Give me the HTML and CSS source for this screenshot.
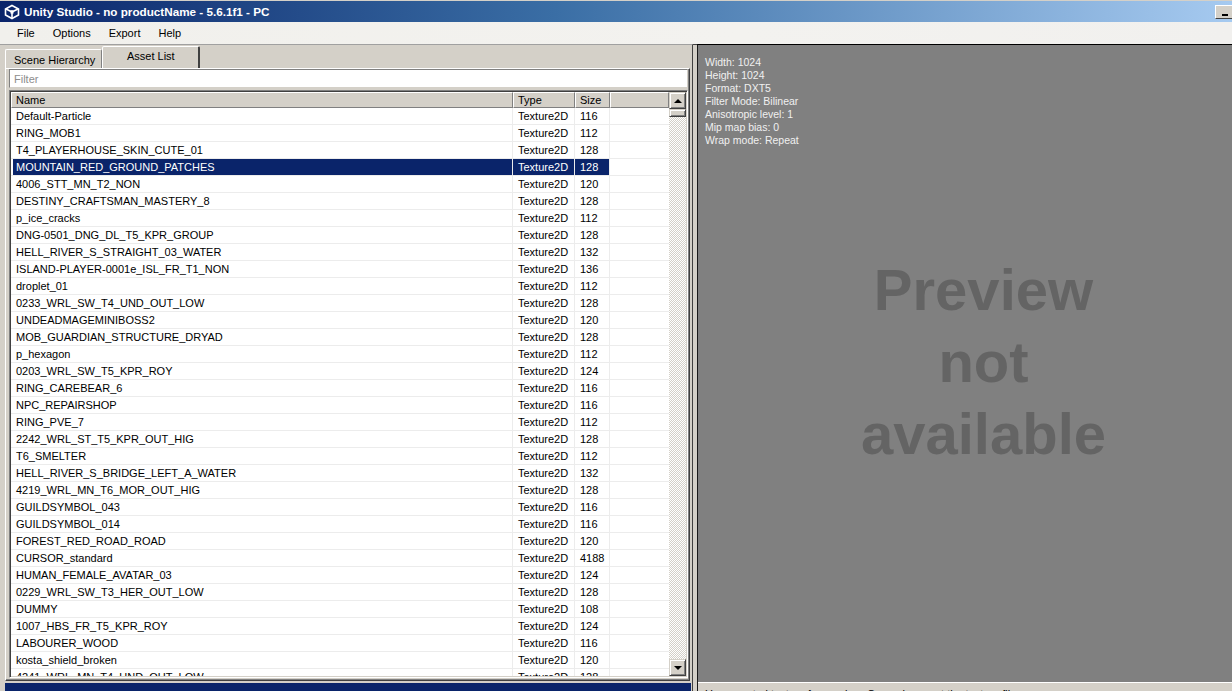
FILE: index.html
```html
<!DOCTYPE html>
<html lang="en">
<head>
    <meta charset="UTF-8">
    <title>Unity Studio - no productName - 5.6.1f1 - PC</title>
    <link rel="stylesheet" href="styles.css">
</head>
<body>

<div class="window">
    <div class="titlebar">
        <svg class="app-icon" width="16" height="16" viewBox="0 0 16 16">
            <path d="M8 1.5 L14.5 5 L14.5 11 L8 14.5 L1.5 11 L1.5 5 Z" fill="none" stroke="#fff" stroke-width="1.6"/>
            <path d="M8 8 L8 14 M8 8 L2 5 M8 8 L14 5" stroke="#fff" stroke-width="1.6" fill="none"/>
            <path d="M6.5 6.2 L9.5 6.2 L9.5 9.6 L6.5 9.6 Z" fill="#fff"/>
        </svg>
        <span class="title">Unity Studio - no productName - 5.6.1f1 - PC</span>
        <span class="min-btn"><span class="min-glyph"></span></span>
    </div>

    <div class="menubar">
        <span class="menu-item">File</span>
        <span class="menu-item">Options</span>
        <span class="menu-item">Export</span>
        <span class="menu-item">Help</span>
    </div>

    <div class="main">
        <div class="left">
            <div class="tabs">
                <div class="tab">Scene Hierarchy</div>
                <div class="tab active">Asset List</div>
            </div>
            <div class="tabpage">
                <input class="filter" type="text" placeholder="Filter">
                <div class="listview">
                    <div class="list-content">
                        <div class="header">
                            <div class="hcell">Name</div>
                            <div class="hcell">Type</div>
                            <div class="hcell">Size</div>
                            <div class="hcell"></div>
                        </div>
                        <div class="rows">
                            <div class="row"><div class="cell">Default-Particle</div><div class="cell">Texture2D</div><div class="cell">116</div><div class="fill"></div></div>
                            <div class="row"><div class="cell">RING_MOB1</div><div class="cell">Texture2D</div><div class="cell">112</div><div class="fill"></div></div>
                            <div class="row"><div class="cell">T4_PLAYERHOUSE_SKIN_CUTE_01</div><div class="cell">Texture2D</div><div class="cell">128</div><div class="fill"></div></div>
                            <div class="row sel"><div class="cell">MOUNTAIN_RED_GROUND_PATCHES</div><div class="cell">Texture2D</div><div class="cell">128</div><div class="fill"></div></div>
                            <div class="row"><div class="cell">4006_STT_MN_T2_NON</div><div class="cell">Texture2D</div><div class="cell">120</div><div class="fill"></div></div>
                            <div class="row"><div class="cell">DESTINY_CRAFTSMAN_MASTERY_8</div><div class="cell">Texture2D</div><div class="cell">128</div><div class="fill"></div></div>
                            <div class="row"><div class="cell">p_ice_cracks</div><div class="cell">Texture2D</div><div class="cell">112</div><div class="fill"></div></div>
                            <div class="row"><div class="cell">DNG-0501_DNG_DL_T5_KPR_GROUP</div><div class="cell">Texture2D</div><div class="cell">128</div><div class="fill"></div></div>
                            <div class="row"><div class="cell">HELL_RIVER_S_STRAIGHT_03_WATER</div><div class="cell">Texture2D</div><div class="cell">132</div><div class="fill"></div></div>
                            <div class="row"><div class="cell">ISLAND-PLAYER-0001e_ISL_FR_T1_NON</div><div class="cell">Texture2D</div><div class="cell">136</div><div class="fill"></div></div>
                            <div class="row"><div class="cell">droplet_01</div><div class="cell">Texture2D</div><div class="cell">112</div><div class="fill"></div></div>
                            <div class="row"><div class="cell">0233_WRL_SW_T4_UND_OUT_LOW</div><div class="cell">Texture2D</div><div class="cell">128</div><div class="fill"></div></div>
                            <div class="row"><div class="cell">UNDEADMAGEMINIBOSS2</div><div class="cell">Texture2D</div><div class="cell">120</div><div class="fill"></div></div>
                            <div class="row"><div class="cell">MOB_GUARDIAN_STRUCTURE_DRYAD</div><div class="cell">Texture2D</div><div class="cell">128</div><div class="fill"></div></div>
                            <div class="row"><div class="cell">p_hexagon</div><div class="cell">Texture2D</div><div class="cell">112</div><div class="fill"></div></div>
                            <div class="row"><div class="cell">0203_WRL_SW_T5_KPR_ROY</div><div class="cell">Texture2D</div><div class="cell">124</div><div class="fill"></div></div>
                            <div class="row"><div class="cell">RING_CAREBEAR_6</div><div class="cell">Texture2D</div><div class="cell">116</div><div class="fill"></div></div>
                            <div class="row"><div class="cell">NPC_REPAIRSHOP</div><div class="cell">Texture2D</div><div class="cell">116</div><div class="fill"></div></div>
                            <div class="row"><div class="cell">RING_PVE_7</div><div class="cell">Texture2D</div><div class="cell">112</div><div class="fill"></div></div>
                            <div class="row"><div class="cell">2242_WRL_ST_T5_KPR_OUT_HIG</div><div class="cell">Texture2D</div><div class="cell">128</div><div class="fill"></div></div>
                            <div class="row"><div class="cell">T6_SMELTER</div><div class="cell">Texture2D</div><div class="cell">112</div><div class="fill"></div></div>
                            <div class="row"><div class="cell">HELL_RIVER_S_BRIDGE_LEFT_A_WATER</div><div class="cell">Texture2D</div><div class="cell">132</div><div class="fill"></div></div>
                            <div class="row"><div class="cell">4219_WRL_MN_T6_MOR_OUT_HIG</div><div class="cell">Texture2D</div><div class="cell">128</div><div class="fill"></div></div>
                            <div class="row"><div class="cell">GUILDSYMBOL_043</div><div class="cell">Texture2D</div><div class="cell">116</div><div class="fill"></div></div>
                            <div class="row"><div class="cell">GUILDSYMBOL_014</div><div class="cell">Texture2D</div><div class="cell">116</div><div class="fill"></div></div>
                            <div class="row"><div class="cell">FOREST_RED_ROAD_ROAD</div><div class="cell">Texture2D</div><div class="cell">120</div><div class="fill"></div></div>
                            <div class="row"><div class="cell">CURSOR_standard</div><div class="cell">Texture2D</div><div class="cell">4188</div><div class="fill"></div></div>
                            <div class="row"><div class="cell">HUMAN_FEMALE_AVATAR_03</div><div class="cell">Texture2D</div><div class="cell">124</div><div class="fill"></div></div>
                            <div class="row"><div class="cell">0229_WRL_SW_T3_HER_OUT_LOW</div><div class="cell">Texture2D</div><div class="cell">128</div><div class="fill"></div></div>
                            <div class="row"><div class="cell">DUMMY</div><div class="cell">Texture2D</div><div class="cell">108</div><div class="fill"></div></div>
                            <div class="row"><div class="cell">1007_HBS_FR_T5_KPR_ROY</div><div class="cell">Texture2D</div><div class="cell">124</div><div class="fill"></div></div>
                            <div class="row"><div class="cell">LABOURER_WOOD</div><div class="cell">Texture2D</div><div class="cell">116</div><div class="fill"></div></div>
                            <div class="row"><div class="cell">kosta_shield_broken</div><div class="cell">Texture2D</div><div class="cell">120</div><div class="fill"></div></div>
                            <div class="row"><div class="cell">4241_WRL_MN_T4_UND_OUT_LOW</div><div class="cell">Texture2D</div><div class="cell">128</div><div class="fill"></div></div>
                        </div>
                    </div>
                    <div class="vscroll">
                        <div class="sbtn"><span class="arrow up"></span></div>
                        <div class="thumb"></div>
                        <div class="track"></div>
                        <div class="sbtn"><span class="arrow down"></span></div>
                    </div>
                </div>
            </div>
            <div class="left-status"><div class="progress"></div></div>
        </div>

        <div class="splitter"></div>

        <div class="right">
            <div class="preview">
                <div class="info">
                    Width: 1024<br>
                    Height: 1024<br>
                    Format: DXT5<br>
                    Filter Mode: Bilinear<br>
                    Anisotropic level: 1<br>
                    Mip map bias: 0<br>
                    Wrap mode: Repeat
                </div>
                <div class="no-preview">Preview<br>not<br>available</div>
            </div>
            <div class="right-status">Unsupported texture for preview. Can only export the texture file.</div>
        </div>
    </div>
</div>

</body>
</html>
```

FILE: styles.css
```css
* {
    box-sizing: border-box;
}
html, body {
    margin: 0;
    height: 100%;
    overflow: hidden;
}
body {
    font-family: "Liberation Sans", Arial, sans-serif;
    font-size: 11px;
    color: #000;
    background-color: #d4d0c8;
}
.window {
    height: 691px;
    display: flex;
    flex-direction: column;
}

/* title bar */
.titlebar {
    height: 22px;
    flex: none;
    display: flex;
    align-items: center;
    padding-left: 4px;
    border-top: 1px solid #d4d0c8;
    background: linear-gradient(to right, #0a246a 0%, #3a6ea5 45%, #a6caf0 100%);
    color: #fff;
    font-size: 11.7px;
    font-weight: bold;
}
.app-icon {
    margin-right: 4px;
}
.min-btn {
    margin-left: auto;
    margin-right: -2px;
    width: 19px;
    height: 14px;
    background-color: #d4d0c8;
    border: 1px solid;
    border-color: #fff #404040 #404040 #fff;
    display: flex;
    align-items: flex-end;
    justify-content: center;
    padding-bottom: 2px;
}
.min-glyph {
    width: 6px;
    height: 2px;
    background-color: #000;
}

/* menu */
.menubar {
    height: 22px;
    flex: none;
    display: flex;
    align-items: center;
    padding-left: 8px;
    background: linear-gradient(to right, #f1f0ec, #f3f2ef 60%, #f1f0ee);
}
.menu-item {
    padding: 0 9px;
}

/* main split */
.main {
    flex: 1;
    display: flex;
    min-height: 0;
}
.left {
    width: 693px;
    flex: none;
    display: flex;
    flex-direction: column;
    border-top: 1px solid #a0a0a0;
    border-right: 1px solid #404040;
    background-color: #d4d0c8;
}
.splitter {
    width: 4px;
    flex: none;
    border-top: 1px solid #404040;
    background-color: #d4d0c8;
}
.right {
    flex: 1;
    display: flex;
    flex-direction: column;
    border-top: 1px solid #000;
    border-left: 1px solid #1a1a1a;
}

/* tabs */
.tabs {
    height: 23px;
    flex: none;
    display: flex;
    align-items: flex-end;
    padding-left: 5px;
}
.tab {
    height: 19px;
    padding: 4px 6px 0 8px;
    border: 1px solid;
    border-color: #fff #808080 transparent #fff;
    border-bottom: none;
    border-radius: 2px 2px 0 0;
    white-space: nowrap;
}
.tab.active {
    height: 22px;
    width: 98px;
    padding: 3px 0 0 0;
    text-align: center;
    background-color: #d4d0c8;
    border-color: #fff #404040 transparent #fff;
    border-right-width: 2px;
}
.tabpage {
    flex: 1;
    min-height: 0;
    display: flex;
    flex-direction: column;
    margin: 0 2px 0 5px;
    padding: 0 1px 2px 3px;
    border: 1px solid;
    border-color: #fff #404040 #404040 #fff;
    box-shadow: inset -1px -1px 0 #808080;
}
.filter {
    height: 19px;
    flex: none;
    margin: 0;
    padding: 0 4px;
    font-family: "Liberation Sans", Arial, sans-serif;
    font-size: 11px;
    border: 1px solid;
    border-color: #808080 #d4d0c8 #d4d0c8 #808080;
    background-color: #fff;
    outline: none;
}
.filter::placeholder {
    color: #8d8d8d;
}

/* list view */
.listview {
    flex: 1;
    min-height: 0;
    margin-top: 2px;
    display: flex;
    border: 1px solid;
    border-color: #808080 #fff #fff #808080;
    box-shadow: inset 1px 1px 0 #404040, inset -1px -1px 0 #d4d0c8;
    padding: 1px;
    background-color: #fff;
}
.list-content {
    flex: 1;
    min-width: 0;
    display: flex;
    flex-direction: column;
    overflow: hidden;
}
.header,
.row {
    display: grid;
    grid-template-columns: 502px 62px 35px 1fr;
}
.header {
    height: 16px;
    flex: none;
}
.hcell {
    background-color: #d4d0c8;
    border: 1px solid;
    border-color: #fff #808080 #808080 #fff;
    box-shadow: inset -1px -1px 0 #d4d0c8;
    padding: 1px 0 0 4px;
    line-height: 13px;
}
.rows {
    flex: 1;
    overflow: hidden;
}
.row {
    height: 17px;
}
.cell {
    padding: 1px 0 0 5px;
    line-height: 15px;
    border-right: 1px solid #ececec;
    border-bottom: 1px solid #ececec;
    white-space: nowrap;
    overflow: hidden;
}
.fill {
    border-bottom: 1px solid #ececec;
}
.row.sel .cell {
    background-color: #0a246a;
    color: #fff;
}
.row.sel .cell:first-child {
    box-shadow: inset 2px 0 0 #fff;
}

/* scroll bar */
.vscroll {
    width: 17px;
    flex: none;
    display: flex;
    flex-direction: column;
}
.sbtn,
.thumb {
    flex: none;
    background-color: #d4d0c8;
    border: 1px solid;
    border-color: #d4d0c8 #404040 #404040 #d4d0c8;
    box-shadow: inset 1px 1px 0 #fff, inset -1px -1px 0 #808080;
}
.sbtn {
    height: 17px;
    display: flex;
    align-items: center;
    justify-content: center;
}
.thumb {
    height: 8px;
}
.track {
    flex: 1;
    background-color: #fff;
    background-image: repeating-conic-gradient(#d4d0c8 0 25%, #fff 0 50%);
    background-size: 2px 2px;
}
.arrow {
    width: 0;
    height: 0;
    border-left: 4px solid transparent;
    border-right: 4px solid transparent;
}
.arrow.up {
    border-bottom: 4px solid #000;
}
.arrow.down {
    border-top: 4px solid #000;
}

/* left status */
.left-status {
    height: 10px;
    flex: none;
    padding: 2px 1px 0 5px;
}
.progress {
    height: 100%;
    background-color: #0a246a;
}

/* right side */
.preview {
    flex: 1;
    min-height: 0;
    display: grid;
    background-color: #808080;
}
.info,
.no-preview {
    grid-area: 1 / 1;
}
.info {
    align-self: start;
    justify-self: start;
    padding: 11px 0 0 7px;
    color: #f0f0f0;
    font-size: 10.5px;
    line-height: 13px;
}
.no-preview {
    align-self: center;
    justify-self: center;
    margin: 0 0 4px 37px;
    text-align: center;
    color: #646464;
    font-size: 58px;
    font-weight: bold;
    line-height: 72px;
}
.right-status {
    height: 9px;
    flex: none;
    overflow: hidden;
    border-top: 1px solid #fff;
    padding: 5px 0 0 7px;
    line-height: 13px;
    white-space: nowrap;
}
```
